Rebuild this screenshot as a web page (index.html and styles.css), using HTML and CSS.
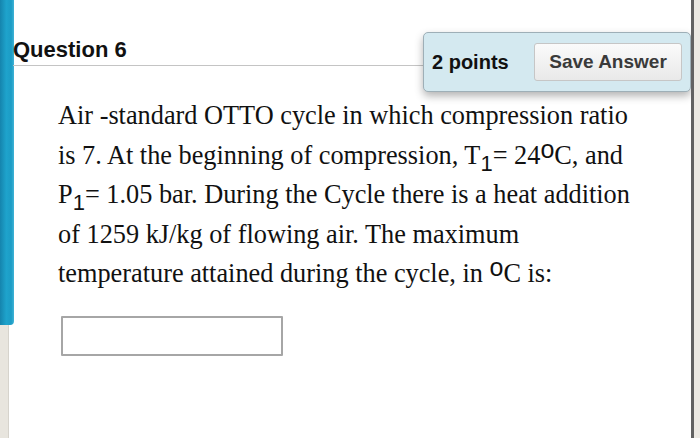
FILE: index.html
```html
<!DOCTYPE html>
<html>
<head>
<meta charset="utf-8">
<link rel="stylesheet" href="styles.css">
</head>
<body>
<div class="page">
  <div class="sidebar">
    <div class="sidebar-blue"></div>
    <div class="sidebar-rest"></div>
  </div>
  <div class="main">
    <div class="header">
      <div class="title">Question 6</div>
      <div class="points-box">
        <span class="points">2 points</span>
        <button class="save-btn">Save Answer</button>
      </div>
    </div>
    <div class="content">
      <p class="question">Air -standard OTTO cycle in which compression ratio<br>is 7. At the beginning of compression, T<span class="sub">1</span>= 24<span class="deg">o</span>C, and<br>P<span class="sub">1</span>= 1.05 bar. During the Cycle there is a heat addition<br>of 1259 kJ/kg of flowing air. The maximum<br>temperature attained during the cycle, in <span class="deg">o</span>C is:</p>
      <div class="answer"></div>
    </div>
  </div>
  <div class="right-edge">
    <div class="edge-line"></div>
    <div class="edge-rest"></div>
  </div>
</div>
</body>
</html>
```
FILE: styles.css
```css
html, body {
  margin: 0;
  padding: 0;
  background: #ffffff;
}
.page {
  display: flex;
  width: 700px;
  height: 438px;
  overflow: hidden;
}
.sidebar {
  width: 14px;
  display: flex;
  flex-direction: column;
  flex-shrink: 0;
}
.sidebar-blue {
  height: 325px;
  background: linear-gradient(to right, #1584ad 0%, #1ea3cc 45%, #1c9cc5 80%, #3fb3d6 100%);
  border-bottom-right-radius: 4px;
}
.sidebar-rest {
  flex: 1;
  width: 8px;
  background: #e8e5de;
  border-right: 1px solid #d6d3cc;
}
.main {
  flex: 1;
  display: flex;
  flex-direction: column;
  min-width: 0;
}
.header {
  display: flex;
  align-items: flex-start;
}
.title {
  flex: 1;
  height: 66px;
  box-sizing: border-box;
  padding-top: 37px;
  font-family: "Liberation Sans", Arial, sans-serif;
  font-weight: bold;
  font-size: 22px;
  line-height: 26px;
  color: #111;
  border-bottom: 1px solid #c4c4c4;
  margin-left: -1px;
}
.points-box {
  margin-top: 32px;
  width: 268px;
  height: 60px;
  box-sizing: border-box;
  display: flex;
  align-items: center;
  justify-content: space-between;
  padding: 0 8px 0 8px;
  background: #d4e9f0;
  border: 1px solid #9eafb7;
  border-radius: 5px;
  box-shadow: 0 4px 8px rgba(0, 0, 0, 0.3);
}
.points {
  font-family: "Liberation Sans", Arial, sans-serif;
  font-weight: bold;
  font-size: 20px;
  color: #111;
}
.save-btn {
  width: 148px;
  height: 38px;
  padding: 0;
  font-family: "Liberation Sans", Arial, sans-serif;
  font-weight: bold;
  font-size: 19px;
  color: #3a3a3a;
  background: linear-gradient(#fbfbfb, #e9e9e9);
  border: 1px solid #c6c6c6;
  border-radius: 3px;
}
.content {
  padding-left: 44px;
}
.question {
  margin: 4px 0 0 0;
  font-family: "Liberation Serif", "Times New Roman", serif;
  font-size: 26.3px;
  line-height: 39.5px;
  color: #111;
}
.sub {
  font-family: "Liberation Sans", Arial, sans-serif;
  font-size: 22px;
  line-height: 0;
  vertical-align: -7px;
}
.deg {
  font-family: "Liberation Sans", Arial, sans-serif;
  font-size: 25px;
  line-height: 0;
  vertical-align: 6px;
}
.answer {
  margin: 22px 0 0 3px;
  width: 222px;
  height: 40px;
  box-sizing: border-box;
  border: 2px solid #a6a6a6;
  border-radius: 1px;
}
.right-edge {
  width: 9px;
  display: flex;
  flex-shrink: 0;
}
.edge-line {
  width: 3px;
  background: #626262;
}
.edge-rest {
  flex: 1;
  background: #ece9e3;
}
```
